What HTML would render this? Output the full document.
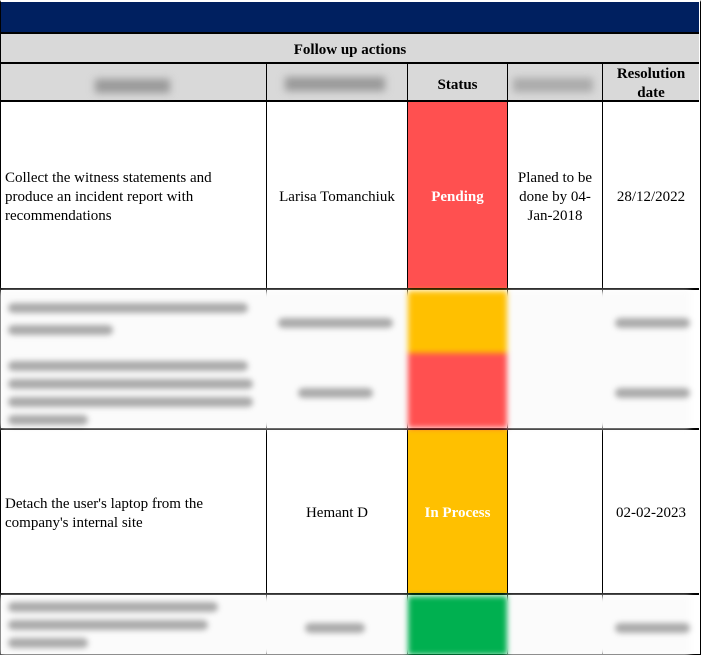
<!DOCTYPE html><html><head><style>
body{margin:0;width:701px;height:655px;background:#fff;overflow:hidden;font-family:"Liberation Serif",serif;font-size:15px;color:#000;position:relative}
.a{position:absolute;box-sizing:border-box}
.c{display:flex;align-items:center;justify-content:center;text-align:center;padding-top:4px}
.l{display:flex;align-items:center;padding-left:4px;padding-top:4px;line-height:19px}
.b{font-weight:bold}
.bl{filter:blur(4px)}
.v{background:#000;position:absolute}
.bar{background:#aaa;height:10px;border-radius:5px;position:absolute}
.z{z-index:5}
</style></head><body>
<div class="a" style="left:0;top:0;width:701px;height:655px;border:1px solid #000;border-top:2px solid #fff"></div>
<div class="a" style="left:1px;top:2px;width:698px;height:30px;background:#002060"></div>
<div class="a c b" style="left:1px;top:32px;width:698px;height:32px;background:#d9d9d9;border-top:2px solid #000;border-bottom:2px solid #000">Follow up actions</div>
<div class="a" style="left:1px;top:64px;width:698px;height:38px;background:#d9d9d9;border-bottom:2px solid #000"></div>
<div class="a bl" style="left:95px;top:79px;width:75px;height:14px;background:#999"></div>
<div class="a bl" style="left:285px;top:77px;width:100px;height:14px;background:#999"></div>
<div class="a c b" style="left:408px;top:64px;width:99px;height:38px">Status</div>
<div class="a bl" style="left:513px;top:78px;width:80px;height:14px;background:#aaa"></div>
<div class="a c b" style="left:603px;top:64px;width:96px;height:38px;line-height:19px;padding-top:1px">Resolution<br>date</div>
<!-- row1 -->
<div class="a l" style="left:1px;top:102px;width:262px;height:186px">Collect the witness statements and produce an incident report with recommendations</div>
<div class="a c" style="left:267px;top:102px;width:140px;height:186px">Larisa Tomanchiuk</div>
<div class="a c b" style="left:408px;top:102px;width:99px;height:186px;background:#ff5050;color:#fff">Pending</div>
<div class="a c" style="left:508px;top:102px;width:94px;height:186px;line-height:19px;padding:4px 6px 0">Planed to be done by 04-Jan-2018</div>
<div class="a c" style="left:603px;top:102px;width:96px;height:186px">28/12/2022</div>
<!-- lines -->
<div class="v" style="left:266px;top:64px;width:1px;height:591px"></div>
<div class="v" style="left:407px;top:64px;width:1px;height:591px"></div>
<div class="v" style="left:507px;top:64px;width:1px;height:591px"></div>
<div class="v" style="left:602px;top:64px;width:1px;height:591px"></div>
<div class="v" style="left:1px;top:288px;width:698px;height:2px"></div>
<div class="v" style="left:1px;top:428px;width:698px;height:2px"></div>
<div class="v" style="left:1px;top:593px;width:698px;height:2px"></div>
<!-- blurred rows -->
<div class="a z" style="left:0;top:291px;width:690px;height:137px;background:#fbfbfb;filter:blur(3px)">
<div class="bar" style="left:8px;top:12px;width:240px"></div><div class="bar" style="left:8px;top:34px;width:105px"></div>
<div class="bar" style="left:278px;top:27px;width:115px"></div>
<div class="a" style="left:408px;top:0;width:99px;height:62px;background:#ffc000"></div>
<div class="bar" style="left:615px;top:27px;width:75px"></div>
<div class="bar" style="left:8px;top:70px;width:240px"></div><div class="bar" style="left:8px;top:88px;width:245px"></div><div class="bar" style="left:8px;top:106px;width:245px"></div><div class="bar" style="left:8px;top:124px;width:80px"></div>
<div class="bar" style="left:298px;top:97px;width:75px"></div>
<div class="a" style="left:408px;top:62px;width:99px;height:75px;background:#ff5050"></div>
<div class="bar" style="left:615px;top:97px;width:75px"></div>
</div>
<!-- row4 -->
<div class="a l" style="left:1px;top:430px;width:262px;height:163px">Detach the user's laptop from the company's internal site</div>
<div class="a c" style="left:267px;top:430px;width:140px;height:163px">Hemant D</div>
<div class="a c b" style="left:408px;top:430px;width:99px;height:163px;background:#ffc000;color:#fff">In Process</div>
<div class="a c" style="left:603px;top:430px;width:96px;height:163px">02-02-2023</div>
<!-- row5 blurred -->
<div class="a z" style="left:0;top:596px;width:690px;height:59px;background:#fbfbfb;filter:blur(3px)">
<div class="bar" style="left:8px;top:6px;width:210px"></div><div class="bar" style="left:8px;top:24px;width:200px"></div><div class="bar" style="left:8px;top:42px;width:80px"></div>
<div class="bar" style="left:305px;top:27px;width:60px"></div>
<div class="a" style="left:408px;top:0;width:99px;height:59px;background:#00b050"></div>
<div class="bar" style="left:615px;top:27px;width:75px"></div>
</div>
</body></html>
